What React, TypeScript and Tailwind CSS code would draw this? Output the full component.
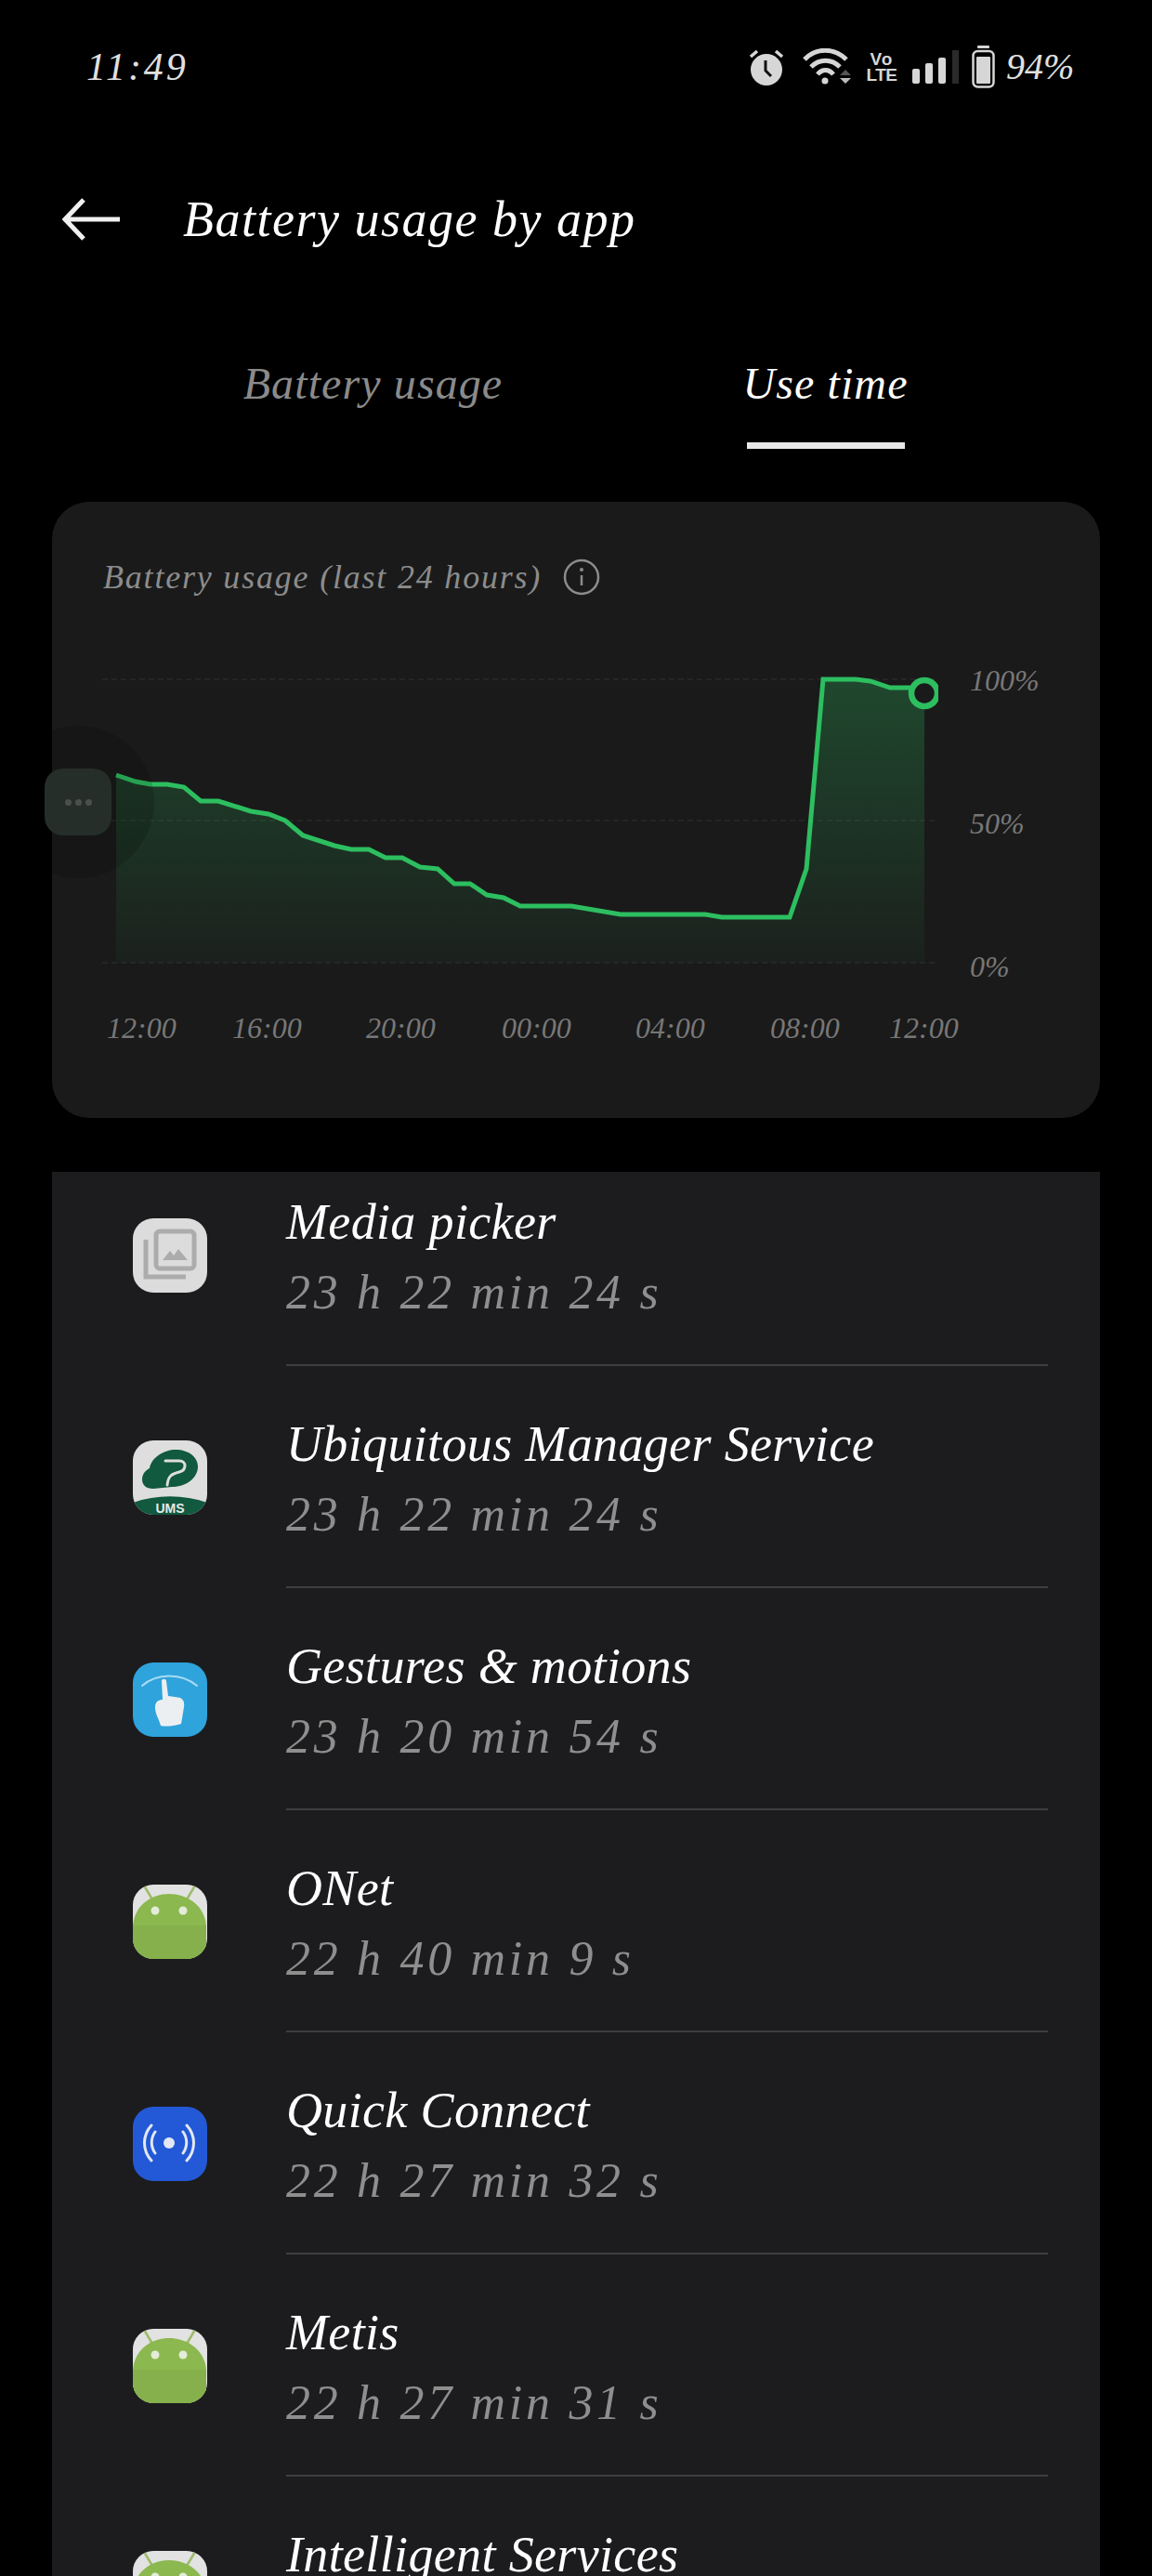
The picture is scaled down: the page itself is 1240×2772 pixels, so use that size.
const font = 'font-["Liberation_Serif",serif] italic'

const linePoints =
  '125,834 146,841 162,844 180,844 198,847 216,862 235,862 270,873 289,876 307,883 326,899 360,910 378,914 397,914 415,923 433,923 452,933 471,935 489,951 506,951 524,963 542,966 560,975 615,975 668,984 759,984 777,987 850,987 868,935 886,731 921,731 937,733 958,740 995,740'

const axisLabels = [
  { label: '12:00', width: 'w-[135px]' },
  { label: '16:00', width: 'w-[144px]' },
  { label: '20:00', width: 'w-[146px]' },
  { label: '00:00', width: 'w-[144px]' },
  { label: '04:00', width: 'w-[145px]' },
  { label: '08:00', width: 'w-[128px]' },
  { label: '12:00', width: 'w-[80px]' },
]

function MediaIcon() {
  return (
    <svg width="80" height="80" viewBox="0 0 80 80">
      <rect width="80" height="80" rx="22" fill="#dcdcdc" />
      <path d="M14 23V63H57" fill="none" stroke="#acacac" strokeWidth="5" />
      <rect x="25" y="14" width="41" height="40" rx="4" fill="none" stroke="#acacac" strokeWidth="5" />
      <path d="M32 45L40 35L44 40L49 33L59 45Z" fill="#acacac" />
    </svg>
  )
}

function UmsIcon() {
  return (
    <svg width="80" height="80" viewBox="0 0 80 80">
      <defs>
        <clipPath id="ums-clip">
          <rect width="80" height="80" rx="22" />
        </clipPath>
      </defs>
      <g clipPath="url(#ums-clip)">
        <rect width="80" height="80" fill="#dedede" />
        <path d="M10 42C10 36 14 32 18 30C20 18 34 10 46 10C60 10 70 18 70 28C70 40 58 50 42 50L22 52C14 52 10 48 10 42Z" fill="#11593f" />
        <path d="M35 22H50C58 22 58 32 50 34C42 36 38 38 37 48" fill="none" stroke="#dedede" strokeWidth="3" strokeLinecap="round" />
        <path d="M0 67C25 58 55 58 80 67V80H0Z" fill="#11593f" />
        <text x="40" y="78" textAnchor="middle" fill="#e8e8e8" fontSize="14" fontWeight="700" fontStyle="normal" fontFamily="Liberation Sans, sans-serif">UMS</text>
      </g>
    </svg>
  )
}

function GestureIcon() {
  return (
    <svg width="80" height="80" viewBox="0 0 80 80">
      <rect width="80" height="80" rx="22" fill="#2fa3dc" />
      <path d="M10 25C26 11 52 11 69 25" fill="none" stroke="#a9dcf3" strokeWidth="2" strokeLinecap="round" />
      <path d="M31 20C31 17 36 17 36 20L38 36L45 37L51 38C54 40 56 42 55 48L52 66C42 69 34 69 30 68C28 60 24 56 24 48C24 42 28 40 32 40Z" fill="#eceff1" />
    </svg>
  )
}

function AndroidIcon() {
  return (
    <svg width="80" height="80" viewBox="0 0 80 80">
      <defs>
        <clipPath id="android-clip">
          <rect width="80" height="80" rx="22" />
        </clipPath>
      </defs>
      <g clipPath="url(#android-clip)">
        <rect width="80" height="80" fill="#e2e2e2" />
        <path d="M12 1L21 16M67 1L58 16" stroke="#9dbb6a" strokeWidth="2.5" />
        <path d="M0 80V44C2 22 20 10 39 10C58 10 77 22 79 44V80Z" fill="#8bb84f" />
        <path d="M0 44H79V80H0Z" fill="#85b04b" />
        <circle cx="24" cy="28" r="4.5" fill="#e4ecd9" />
        <circle cx="54" cy="28" r="4.5" fill="#e4ecd9" />
      </g>
    </svg>
  )
}

function ConnectIcon() {
  return (
    <svg width="80" height="80" viewBox="0 0 80 80">
      <rect width="80" height="80" rx="22" fill="#2359d6" />
      <circle cx="39" cy="39" r="6" fill="#e3e8f5" />
      <path d="M24 27C19 34 19 43 24 50M54 27C59 34 59 43 54 50M20 20C10 31 10 47 20 58M58 20C68 31 68 47 58 58" fill="none" stroke="#e3e8f5" strokeWidth="3" strokeLinecap="round" />
    </svg>
  )
}

// the last row is cut by the bottom of the screen, its time is never seen
const rows = [
  { icon: <MediaIcon />, name: 'Media picker', time: '23 h 22 min 24 s' },
  { icon: <UmsIcon />, name: 'Ubiquitous Manager Service', time: '23 h 22 min 24 s' },
  { icon: <GestureIcon />, name: 'Gestures & motions', time: '23 h 20 min 54 s' },
  { icon: <AndroidIcon />, name: 'ONet', time: '22 h 40 min 9 s' },
  { icon: <ConnectIcon />, name: 'Quick Connect', time: '22 h 27 min 32 s' },
  { icon: <AndroidIcon />, name: 'Metis', time: '22 h 27 min 31 s' },
  { icon: <AndroidIcon />, name: 'Intelligent Services', time: '' },
]

function StatusIcons() {
  return (
    <div className="flex items-center text-[#dcdcdc]">
      {/* alarm */}
      <svg width="38" height="40" viewBox="0 0 38 40">
        <circle cx="19" cy="23" r="17" fill="#d6d6d6" />
        <path d="M2 9L9 3M36 9L29 3" stroke="#d6d6d6" strokeWidth="3.5" />
        <path d="M18 13V24L24 30" fill="none" stroke="#111" strokeWidth="3" />
      </svg>
      {/* wifi */}
      <svg className="ml-[20px]" width="52" height="40" viewBox="0 0 52 40">
        <path d="M2 12C14 -1 34 -1 47 12" fill="none" stroke="#d6d6d6" strokeWidth="5" />
        <path d="M9 20C18 11 31 11 40 20" fill="none" stroke="#d6d6d6" strokeWidth="5" />
        <path d="M16 28C21 22 28 22 33 28" fill="none" stroke="#d6d6d6" strokeWidth="5" />
        <circle cx="24" cy="35" r="3.5" fill="#d6d6d6" />
        <path d="M40 29L46 23L52 29Z" fill="#555" />
        <path d="M40 32L46 38L52 32Z" fill="#bbb" />
      </svg>
      <div className="ml-[20px] flex w-[26px] flex-col items-center font-['Liberation_Sans',sans-serif] text-[19px] leading-[17px] font-bold text-[#d6d6d6] not-italic">
        <span className="tracking-[1px]">Vo</span>
        <span className="tracking-[-0.5px]">LTE</span>
      </div>
      {/* signal */}
      <svg className="ml-[20px]" width="50" height="36" viewBox="0 0 50 36">
        <rect x="0" y="20" width="8" height="16" rx="2" fill="#d6d6d6" />
        <rect x="14" y="14" width="8" height="22" rx="2" fill="#d6d6d6" />
        <rect x="28" y="8" width="8" height="28" rx="2" fill="#d6d6d6" />
        <rect x="43" y="0" width="7" height="36" fill="#2a2a2a" />
      </svg>
      {/* battery */}
      <svg className="ml-[14px]" width="25" height="46" viewBox="0 0 25 46">
        <rect x="6" y="0" width="13" height="3" rx="1" fill="#d6d6d6" />
        <rect x="1.5" y="6" width="22" height="38.5" rx="5" fill="none" stroke="#d6d6d6" strokeWidth="2.5" />
        <rect x="5" y="12" width="15" height="29" rx="1" fill="#d6d6d6" />
      </svg>
      <span className={`${font} ml-[12px] w-[72px] text-[40px] leading-[40px] text-[#e0e0e0]`}>94%</span>
    </div>
  )
}

export default function App() {
  return (
    <div className={`relative h-[2772px] w-[1240px] overflow-hidden bg-black ${font}`}>
      {/* status bar */}
      <div className="flex h-[144px] items-center justify-between pr-[85px] pl-[93px]">
        <span className="text-[42px] tracking-[3px] text-[#e0e0e0]">11:49</span>
        <StatusIcons />
      </div>

      {/* header */}
      <div className="mt-[42px] flex h-[100px] items-center pl-[67px]">
        <svg width="62" height="46" viewBox="0 0 62 46">
          <path d="M23 2L3 23L23 44M3 23H62" fill="none" stroke="#f0f0f0" strokeWidth="5" />
        </svg>
        <h1 className="ml-[68px] text-[54px] font-normal tracking-[1.5px] text-white">Battery usage by app</h1>
      </div>

      {/* tabs */}
      <div className="ml-[158px] grid h-[197px] grid-cols-[487px_487px]">
        <div className="flex flex-col items-center pt-[97px]">
          <span className="text-[48px] leading-[60px] tracking-[1.1px] text-[#8a8a8a]">Battery usage</span>
        </div>
        <div className="flex flex-col items-center pt-[97px]">
          <span className="text-[48px] leading-[60px] tracking-[1.1px] text-white">Use time</span>
          <div className="mt-[33px] h-[7px] w-[170px] bg-[#e8e8e8]" />
        </div>
      </div>

      {/* chart card */}
      <section className="mx-[56px] mt-[57px] h-[663px] rounded-[40px] bg-[#1a1a1a] pt-[60px]">
        <div className="flex h-[42px] items-center pl-[55px]">
          <span className="text-[36px] tracking-[1.8px] text-[#8c8c8c]">Battery usage (last 24 hours)</span>
          <svg className="ml-[22px]" width="42" height="42" viewBox="0 0 42 42">
            <circle cx="21" cy="21" r="18" fill="none" stroke="#8c8c8c" strokeWidth="2.5" />
            <circle cx="21" cy="13" r="2" fill="#8c8c8c" />
            <path d="M21 19V30" stroke="#8c8c8c" strokeWidth="2.5" />
          </svg>
        </div>
        <div className="mt-[72px] flex pl-[54px]">
          <svg width="900" height="344" viewBox="110 714 900 344">
            <defs>
              <linearGradient id="area" x1="0" y1="0" x2="0" y2="1">
                <stop offset="0" stopColor="#2dbe60" stopOpacity="0.28" />
                <stop offset="1" stopColor="#2dbe60" stopOpacity="0.04" />
              </linearGradient>
            </defs>
            <path d="M110 731H1007M110 883H1007M110 1036H1007" stroke="#2a2a2a" strokeWidth="1.5" strokeDasharray="6 4" />
            <polygon points={`${linePoints} 995,1036 125,1036`} fill="url(#area)" />
            <polyline points={linePoints} fill="none" stroke="#2dbe60" strokeWidth="5" />
            <circle cx="995" cy="746" r="14" fill="#1a1a1a" stroke="#2dbe60" strokeWidth="6.5" />
          </svg>
          <div className="ml-[34px] flex h-[344px] flex-col justify-between text-[32px] leading-[36px] text-[#777777]">
            <span>100%</span>
            <span>50%</span>
            <span>0%</span>
          </div>
        </div>
        <div className="mt-[30px] flex pl-[59px] text-[32px] leading-[36px] text-[#777777]">
          {axisLabels.map((item, i) => (
            <span key={i} className={item.width}>{item.label}</span>
          ))}
        </div>
      </section>

      {/* app list */}
      <section className="mx-[56px] mt-[58px] h-[1600px] overflow-hidden bg-[#1c1c1e]">
        <div className="-mt-[30px]">
          {rows.map((row, i) => (
            <div key={i} className="flex h-[239px] items-center pl-[87px]">
              <div className="shrink-0">{row.icon}</div>
              <div className="mr-[56px] ml-[85px] flex h-full flex-1 flex-col justify-center border-b-2 border-[#3e3e40] pt-[6px]">
                <div className="text-[54px] leading-[70px] tracking-[0.35px] text-white">{row.name}</div>
                <div className="mt-[6px] h-[70px] text-[52px] leading-[70px] tracking-[3.7px] text-[#8e8e8e]">{row.time}</div>
              </div>
            </div>
          ))}
        </div>
      </section>

      {/* floating handle */}
      <div className="absolute top-[781px] left-[2px] flex h-[164px] w-[164px] items-center justify-center rounded-full bg-black/15">
        <div className="flex h-[72px] w-[72px] items-center justify-center gap-[4px] rounded-[20px] bg-[#262e29]">
          <span className="h-[7px] w-[7px] rounded-full bg-[#4a504c]" />
          <span className="h-[7px] w-[7px] rounded-full bg-[#4a504c]" />
          <span className="h-[7px] w-[7px] rounded-full bg-[#4a504c]" />
        </div>
      </div>
    </div>
  )
}
